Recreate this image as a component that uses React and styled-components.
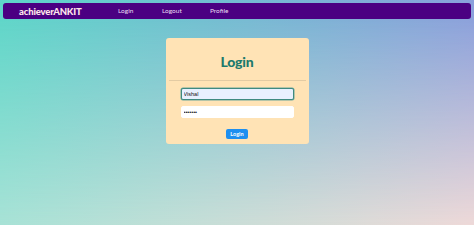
import React from "react";
import styled, { createGlobalStyle } from "styled-components";

const Global = createGlobalStyle`
  html, body { margin: 0; padding: 0; }
  body { font-family: Lato, "Open Sans", sans-serif; }
`;

const Page = styled.div`
  position: relative;
  min-height: 225px;
  box-sizing: border-box;
  padding: 3px 3px 0;
  background: linear-gradient(to right, #5ed6c9, #8aa0dc);
  overflow: hidden;
  &::before {
    content: "";
    position: absolute;
    inset: 0;
    background: linear-gradient(to right, #a8e2d6, #eed9d8);
    -webkit-mask-image: linear-gradient(to bottom, transparent 5%, black 100%);
    mask-image: linear-gradient(to bottom, transparent 5%, black 100%);
  }
  & > * { position: relative; }
`;

const Nav = styled.nav`
  height: 16px;
  background: #4b0082;
  border-radius: 3px;
  display: flex;
  align-items: center;
  padding-left: 16px;
`;

const Brand = styled.div`
  font-weight: 900;
  font-size: 9.5px;
  letter-spacing: -0.15px;
  color: #ffe6ea;
  width: 99px;
`;

const NavLink = styled.a`
  font-size: 6.5px;
  color: #eadcf2;
  text-decoration: none;
  width: ${p => p.$w}px;
  margin-top: -2px;
`;

const Main = styled.main`
  display: flex;
  justify-content: center;
  padding-top: 19px;
`;

const Card = styled.form`
  width: 143px;
  height: 106px;
  box-sizing: border-box;
  background: #ffe3b5;
  border-radius: 3px;
  padding: 14px 3px 0;
  display: flex;
  flex-direction: column;
  align-items: center;
`;

const Title = styled.h1`
  margin: 0;
  font-size: 14px;
  line-height: 20px;
  font-weight: 900;
  letter-spacing: -0.2px;
  color: #1c7a6c;
`;

const Rule = styled.hr`
  align-self: stretch;
  margin: 8px 0 7px;
  border: none;
  border-top: 1px solid #e3cba3;
`;

const Input = styled.input`
  width: 113px;
  height: 12px;
  box-sizing: border-box;
  margin: 0 0 ${p => p.$mb}px;
  padding: 0 2px;
  font-family: "Liberation Sans", Arial, sans-serif;
  font-size: 5.5px;
  color: #111;
  border-radius: 2px;
  outline: none;
  border: 1px solid ${p => (p.$focused ? "#3e8a80" : "#fff")};
  background: ${p => (p.$focused ? "#e8f0fe" : "#fff")};
  box-shadow: ${p => (p.$focused ? "0 0 0 0.5px #6aa59c" : "none")};
`;

const Button = styled.button`
  width: 22px;
  height: 10px;
  padding: 0;
  border: none;
  border-radius: 2px;
  background: #1e8ff0;
  color: #fff;
  font-family: Lato, sans-serif;
  font-weight: 700;
  font-size: 5.5px;
`;

export default function App() {
  return (
    <>
      <Global />
      <Page>
        <Nav>
          <Brand>achieverANKIT</Brand>
          <NavLink $w={44}>Login</NavLink>
          <NavLink $w={48}>Logout</NavLink>
          <NavLink $w={30}>Profile</NavLink>
        </Nav>
        <Main>
          <Card onSubmit={e => e.preventDefault()}>
            <Title>Login</Title>
            <Rule />
            <Input $focused $mb={6} defaultValue="Vishal" />
            <Input type="password" $mb={11} defaultValue="1234567" />
            <Button>Login</Button>
          </Card>
        </Main>
      </Page>
    </>
  );
}
